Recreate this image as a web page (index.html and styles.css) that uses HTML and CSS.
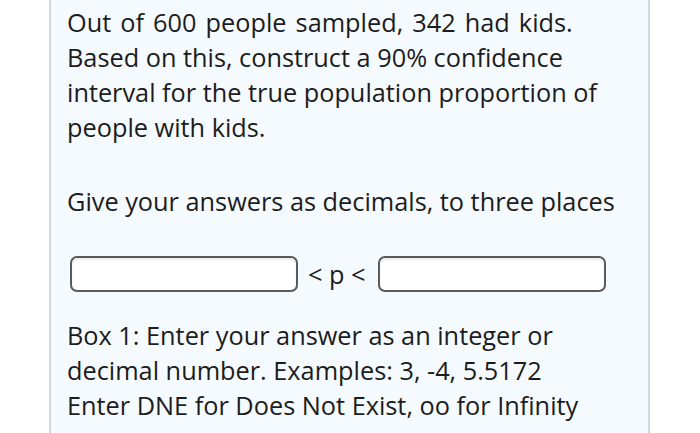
FILE: index.html
```html
<!DOCTYPE html>
<html>
<head>
<meta charset="utf-8">
<link rel="stylesheet" href="styles.css">
</head>
<body>
<div class="page">
  <div class="panel">
    <p class="para"><span class="wide">Out of 600 people sampled, 342 had kids.</span><br>Based on this, construct a 90% confidence<br>interval for the true population proportion of<br>people with kids.</p>
    <p class="para gap">Give your answers as decimals, to three places</p>
    <div class="row">
      <span class="box"></span>
      <span class="op">&lt; p &lt;</span>
      <span class="box"></span>
    </div>
    <p class="para note">Box 1: Enter your answer as an integer or<br>decimal number. Examples: 3, -4, 5.5172<br>Enter DNE for Does Not Exist, oo for Infinity</p>
  </div>
</div>
</body>
</html>
```
FILE: styles.css
```css
html, body {
  margin: 0;
  padding: 0;
  background: #ffffff;
}
.page {
  width: 700px;
  height: 433px;
  overflow: hidden;
  display: flex;
}
.panel {
  margin-left: 49px;
  width: 581px;
  height: 433px;
  background: #f5faff;
  border-left: 2px solid #d0d7e0;
  border-right: 2px solid #d0d7e0;
  padding: 5px 0 0 16px;
  box-sizing: content-box;
  font-family: "Open Sans", sans-serif;
  font-size: 25.3px;
  line-height: 35px;
  color: #1c1c1c;
}
.para {
  margin: 0;
}
.wide {
  word-spacing: 2.5px;
}
.gap {
  margin-top: 39px;
}
.row {
  display: flex;
  align-items: center;
  margin-top: 37px;
  height: 36px;
}
.box {
  display: block;
  width: 224px;
  height: 32px;
  background: #ffffff;
  border: 2px solid #5a5a5a;
  border-radius: 7px;
  box-shadow: inset 0 2px 2px rgba(0,0,0,0.08);
  margin-left: 3px;
}
.op {
  margin: 0 9px 0 10px;
  line-height: 36px;
}
.note {
  margin-top: 26px;
}
```
